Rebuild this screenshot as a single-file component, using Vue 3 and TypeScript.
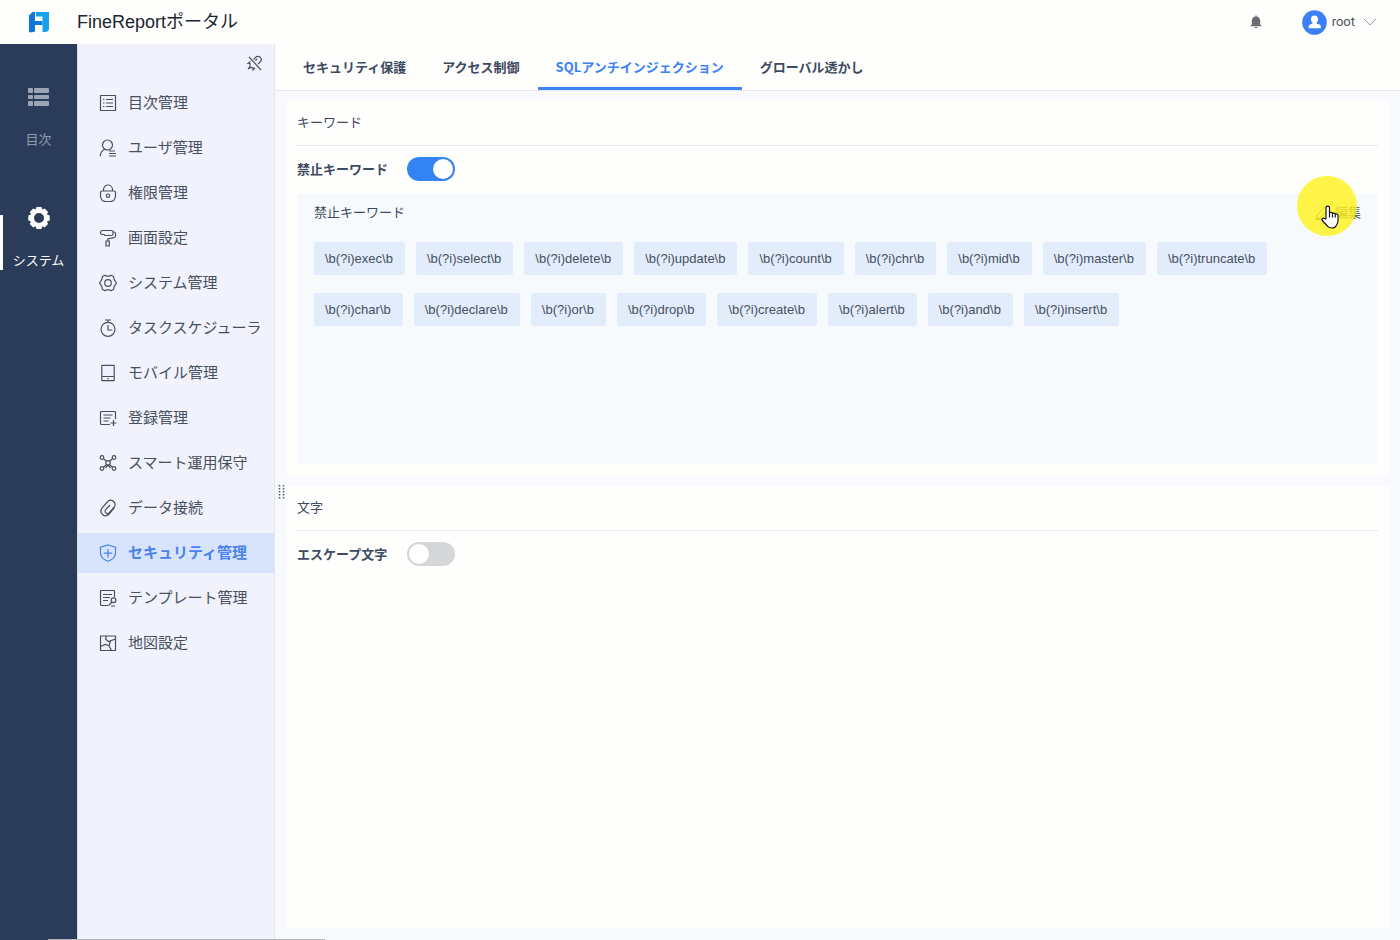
<script setup lang="ts">
import { ref } from 'vue'

interface MenuEntry {
  id: string
  label: string
}

const menu: MenuEntry[] = [
  { id: 'directory', label: '目次管理' },
  { id: 'user', label: 'ユーザ管理' },
  { id: 'authority', label: '権限管理' },
  { id: 'appearance', label: '画面設定' },
  { id: 'system', label: 'システム管理' },
  { id: 'schedule', label: 'タスクスケジューラ' },
  { id: 'mobile', label: 'モバイル管理' },
  { id: 'register', label: '登録管理' },
  { id: 'operation', label: 'スマート運用保守' },
  { id: 'connection', label: 'データ接続' },
  { id: 'security', label: 'セキュリティ管理' },
  { id: 'template', label: 'テンプレート管理' },
  { id: 'map', label: '地図設定' },
]

const tabs: string[] = ['セキュリティ保護', 'アクセス制御', 'SQLアンチインジェクション', 'グローバル透かし']

const words: string[] = [
  'exec', 'select', 'delete', 'update', 'count', 'chr', 'mid', 'master', 'truncate',
  'char', 'declare', 'or', 'drop', 'create', 'alert', 'and', 'insert',
]

const activeMenu = ref('security')
const activeTab = ref(2)
const keywordOn = ref(true)
const escapeOn = ref(false)
</script>

<template>
  <div class="portal">
    <header class="topbar">
      <svg class="logo" viewBox="0 0 22 22" aria-hidden="true">
        <path d="M4.500 1H7v9h7.500v4H7v6.500c-2 .8-4 .8-6 .8V4.500z" fill="#0c78d8" />
        <path d="M8 1h13v16.500c0 2-1.500 3.500-3.500 3.500h-3V5.500H8z" fill="#18a0ea" />
      </svg>
      <h1 class="title">FineReportポータル</h1>
      <button class="bell" type="button" aria-label="通知">
        <svg viewBox="0 0 14 14" width="14" height="14">
          <path d="M6.300 1.500V.5h1.400v1C10 1.900 11.200 3.500 11.200 6v3.300l1.300 1.400v.6h-11v-.6l1.300-1.400V6c0-2.500 1.200-4.100 3.500-4.500zM5.500 12h3c-.3.900-.8 1.200-1.500 1.200S5.800 12.900 5.500 12z" fill="#6b6f74" />
        </svg>
      </button>
      <button class="account" type="button">
        <svg viewBox="0 0 25 25" width="25" height="25" aria-hidden="true">
          <circle cx="12.500" cy="12.500" r="12.300" fill="#3b7ff5" />
          <path d="M12.500 5.500c2.300 0 3.600 1.600 3.600 3.500 0 1.700-.7 2.800-1.600 3.600v.9l2.800 1c1 .4 1.500 1 1.500 1.900v1.900H6.700v-1.900c0-.9.500-1.500 1.500-1.900l2.300-1v-.9C9.600 11.800 8.900 10.700 8.900 9c0-1.900 1.300-3.500 3.600-3.500z" fill="#fff" />
        </svg>
        <span>root</span>
        <svg class="chevron" viewBox="0 0 14 8" width="14" height="8" aria-hidden="true">
          <path d="M1 1l6 6 6-6" fill="none" stroke="#9a9da6" />
        </svg>
      </button>
    </header>

    <div class="body">
      <nav class="rail" aria-label="メイン">
        <button class="rail-item" type="button">
          <svg viewBox="0 0 24 24" width="24" height="24" aria-hidden="true">
            <g fill="#9ba5b5">
              <rect x="1" y="3" width="5" height="5" rx="1" /><rect x="7" y="3" width="15" height="5" rx="1" />
              <rect x="1" y="10" width="5" height="4" rx="1" /><rect x="7" y="10" width="15" height="4" rx="1" />
              <rect x="1" y="16" width="5" height="5" rx="1" /><rect x="7" y="16" width="15" height="5" rx="1" />
            </g>
          </svg>
          <span>目次</span>
        </button>
        <button class="rail-item current" type="button">
          <svg viewBox="0 0 24 24" width="24" height="24" aria-hidden="true">
            <path d="M9.500 1h5l.7 2.600 2.500-1.100 3.400 3.500-1.200 2.500 2.800 1v5l-2.800 1 1.200 2.500-3.400 3.500-2.500-1.200-.7 2.700h-5l-.8-2.700-2.500 1.200L2.800 18 4 15.500l-2.700-1v-5l2.700-1L2.800 6l3.400-3.500 2.500 1.100zM12 7a5 5 0 1 0 0 10 5 5 0 0 0 0-10z" fill="#fff" fill-rule="evenodd" />
          </svg>
          <span>システム</span>
        </button>
      </nav>

      <aside class="side">
        <button class="unpin" type="button" aria-label="固定解除">
          <svg viewBox="0 0 16 16" width="16" height="16">
            <g fill="none" stroke="#4b5361" stroke-width="1.200">
              <path d="M2 2l12 13M6.500 4.500l2-2c1.700-1.600 3.300-1.500 4.600-.3 1.400 1.400 1.500 3.300 0 4.800l-2 2M8.500 5.500l1.700-1.700M3.500 6.500L1 8.500h2v3l-2 2.500 2.700-1.500 2.300.5v2l2-2.300" />
            </g>
          </svg>
        </button>
        <ul class="menu">
          <li v-for="item in menu" :key="item.id">
            <a
              href="#"
              :class="['menu-link', { active: item.id === activeMenu }]"
              @click.prevent="activeMenu = item.id"
            >
              <svg viewBox="0 0 18 18" width="18" height="18" aria-hidden="true">
                <g fill="none" stroke="currentColor" stroke-width="1.200">
                  <template v-if="item.id === 'directory'">
                    <path d="M1.500 1.500h15v15h-15z" />
                    <path d="M4 5.500h1.500M7 5.500h7M4 9h1.500M7 9h7M4 12.500h1.500M7 12.500h7" />
                  </template>
                  <template v-else-if="item.id === 'user'">
                    <circle cx="8.500" cy="6" r="5" />
                    <path d="M6 10.300C3 11.500 1.300 14 1.300 17.300M10 12h6M10 14.500h7M10 17h7" />
                  </template>
                  <template v-else-if="item.id === 'authority'">
                    <path d="M3 7h12c1 0 1.500.5 1.500 1.500v3c0 4-2.500 6-5 6h-5c-2.500 0-5-2-5-6v-3C1.500 7.500 2 7 3 7zM4.500 7V5.500a4.500 4.500 0 0 1 9 0V7" />
                    <circle cx="9" cy="11.700" r="1.700" />
                  </template>
                  <template v-else-if="item.id === 'appearance'">
                    <path d="M3.500 1.500h9c1 0 1.500.5 1.500 1.500v2c0 1-.5 1.500-1.500 1.500h-6c-.8 0-1-.5-1.500-1H3C2 5.500 1.500 5 1.500 4s.5-2.500 2-2.500zM14 3h1c1 0 1.500.7 1.500 1.500v2.500c0 1-.7 1.400-1.500 1.700L8.700 10v2M7 12h3.300v5H7z" />
                  </template>
                  <template v-else-if="item.id === 'system'">
                    <path d="M6 1.200l1.500 1h3l1.500-1 2.700 1.600.2 2 1.300 2.300L17.500 9l-1.300 1.900-1.300 2.300-.2 2L12 16.800l-1.500-1h-3l-1.500 1-2.700-1.600-.2-2-1.300-2.300L.6 9l1.200-1.900 1.300-2.300.2-2z" stroke-linejoin="round" />
                    <circle cx="9" cy="9" r="3.300" />
                  </template>
                  <template v-else-if="item.id === 'schedule'">
                    <circle cx="9" cy="10.300" r="7" />
                    <path d="M6 1h6M9 1v2.300M9 6v5h4.300" />
                  </template>
                  <template v-else-if="item.id === 'mobile'">
                    <path d="M3.500 1.300h11c.4 0 .7.3.7.7v14c0 .4-.3.700-.7.700h-11c-.4 0-.7-.3-.7-.7V2c0-.4.3-.7.7-.7zM3 12.500h12M8.300 14.600h1.400" />
                  </template>
                  <template v-else-if="item.id === 'register'">
                    <path d="M16.500 10V3.500c0-.7-.3-1-1-1h-13c-.7 0-1 .3-1 1v11c0 .7.300 1 1 1H11M4.500 6h9M4.500 9h7M4.500 12h5M14.500 11v6M11.500 14h6" />
                  </template>
                  <template v-else-if="item.id === 'operation'">
                    <circle cx="3" cy="3.500" r="1.800" /><circle cx="15" cy="3.500" r="1.800" />
                    <circle cx="3" cy="14.500" r="1.800" /><circle cx="15" cy="14.500" r="1.800" />
                    <circle cx="9" cy="8.800" r="2.200" />
                    <path d="M4.500 4.700l3 2.600M13.500 4.700l-3 2.600M4.500 13.300l3-2.800M13.500 13.300l-3-2.800M6.500 14l2.500-3 2.500 3" />
                  </template>
                  <template v-else-if="item.id === 'connection'">
                    <path d="M15.500 8.500l-5 6c-2 2.300-4.500 3-6.700 1.300-2.400-1.900-2.500-4.500-.6-6.900L8.300 3c1.600-2 3.900-2.400 6-.8 2.100 1.700 2.400 3.900.7 6l-4.600 5.400c-1 1.200-2.300 1.300-3.400.5s-1.300-2.200-.3-3.400L11 6" />
                  </template>
                  <template v-else-if="item.id === 'security'">
                    <path d="M9 1l7.500 2.300V9c0 4-2.500 6.500-7.500 8.300C4 15.500 1.500 13 1.500 9V3.300zM9 5v8.500M4.800 9.200h8.500" />
                  </template>
                  <template v-else-if="item.id === 'template'">
                    <path d="M15.500 8V2.500c0-.7-.3-1-1-1h-12c-.7 0-1 .3-1 1v13c0 .7.300 1 1 1H9M4 5.500h9M4 8.500h7M4 11.500h5M9.500 16.500l3.500-3.500M12 17h4" />
                    <circle cx="14.500" cy="11.300" r="2.400" />
                  </template>
                  <template v-else>
                    <path d="M1.500 2h15v14.500h-15zM7.500 2l-1 3 3 2.500 7-2.500M1.500 12.500l5-2 3.500 1.200L11.500 7M10 11.700l2.500 4.800" />
                  </template>
                </g>
              </svg>
              <span>{{ item.label }}</span>
            </a>
          </li>
        </ul>
      </aside>

      <main class="content">
        <div class="tabs" role="tablist">
          <button
            v-for="(tab, i) in tabs"
            :key="tab"
            type="button"
            role="tab"
            :aria-selected="i === activeTab"
            :class="['tab', { active: i === activeTab }]"
            @click="activeTab = i"
          >{{ tab }}</button>
        </div>

        <div class="panels">
          <svg class="grip" viewBox="0 0 7 15" width="7" height="15" aria-hidden="true">
            <path d="M1.500 1v14M5.500 1v14" stroke="#555b66" stroke-width="1.500" stroke-dasharray="1.500 1.500" />
          </svg>
          <section class="panel">
            <h2 class="panel-title">キーワード</h2>
            <div class="setting">
              <label for="keyword-switch">禁止キーワード</label>
              <input id="keyword-switch" v-model="keywordOn" class="switch" type="checkbox" role="switch" />
            </div>
            <div class="keywords">
              <div class="keywords-head">
                <h3>禁止キーワード</h3>
                <button class="edit" type="button">
                  <svg viewBox="0 0 16 16" width="16" height="16" aria-hidden="true">
                    <path d="M1 14.500l1.500-5L10 2l3 3-7.500 7.500-4.500 2h9" fill="none" stroke="#3d4a60" />
                  </svg>
                  <span>編集</span>
                  <span class="spot"></span>
                  <svg class="pointer" viewBox="0 0 18 24" width="18" height="24" aria-hidden="true">
                    <path d="M5 14V3c0-2.400 3.500-2.400 3.500 0v5c.6-1 2.700-.8 3 .5.800-.8 2.500-.5 2.800.7 1.200-.6 2.700 0 2.700 1.500V16c0 2-1.200 3.500-2 5-.6 1.500-1.700 2-4 2-2.500 0-3.800-.6-5-2.500L1.300 15.500c-1.100-1.700 1-3 2.200-1.800zM8.500 8v4.500M11.500 8.500v4M14.300 9.500v3" fill="#fff" stroke="#16161c" stroke-width="1.200" stroke-linejoin="round" />
                  </svg>
                </button>
              </div>
              <ul class="tags">
                <li v-for="word in words" :key="word" class="tag">\b(?i){{ word }}\b</li>
              </ul>
            </div>
          </section>

          <section class="panel grow">
            <h2 class="panel-title">文字</h2>
            <div class="setting">
              <label for="escape-switch">エスケープ文字</label>
              <input id="escape-switch" v-model="escapeOn" class="switch" type="checkbox" role="switch" />
            </div>
          </section>
        </div>
      </main>
    </div>
    <div class="progress"></div>
  </div>
</template>

<style>
body {
  margin: 0;
}
</style>

<style scoped>
.portal {
  position: relative;
  display: flex;
  flex-direction: column;
  min-height: 100vh;
  background: #fefefd;
  color: #3d4a60;
  font-family: "Liberation Sans", "Noto Sans CJK JP", sans-serif;
  font-size: 13px;
  line-height: 20px;
}

.portal * {
  box-sizing: border-box;
}

button {
  margin: 0;
  padding: 0;
  border: 0;
  background: none;
  color: inherit;
  font: inherit;
  cursor: pointer;
}

ul {
  margin: 0;
  padding: 0;
  list-style: none;
}

svg {
  flex: none;
}

.topbar {
  display: flex;
  align-items: center;
  height: 44px;
  padding: 0 23px 0 28px;
}

.logo {
  width: 22px;
  height: 22px;
}

.title {
  margin: 0 auto 0 27px;
  color: #20242c;
  font-size: 18px;
  font-weight: 400;
  line-height: 26px;
}

.bell {
  display: flex;
  margin-right: 39px;
}

.account {
  display: flex;
  align-items: center;
  gap: 5px;
  color: #50545c;
  font-family: Roboto, sans-serif;
}

.chevron {
  margin-left: 3px;
}

.body {
  display: flex;
  flex: 1;
}

.rail {
  width: 77px;
  padding-top: 41px;
  background: #2b3c5a;
}

.rail-item {
  position: relative;
  display: flex;
  flex-direction: column;
  align-items: center;
  gap: 21px;
  width: 100%;
  margin-bottom: 56px;
  color: #929caf;
}

.rail-item.current {
  color: #fff;
}

.rail-item.current::before {
  content: "";
  position: absolute;
  top: 9px;
  left: 0;
  width: 3px;
  height: 55px;
  background: #fff;
}

.side {
  width: 198px;
  padding-top: 11px;
  border-left: 1px solid #d5ddec;
  border-right: 1px solid #e3e6ee;
  background: #f1f2fb;
}

.unpin {
  display: flex;
  margin: 0 11px 12px auto;
}

.menu {
  display: flex;
  flex-direction: column;
  gap: 5px;
}

.menu-link {
  display: flex;
  align-items: center;
  gap: 11px;
  height: 40px;
  padding-left: 21px;
  color: #48505f;
  font-size: 15px;
  text-decoration: none;
  white-space: nowrap;
}

.menu-link.active {
  background: #d8e4fc;
  color: #4a82ee;
  font-weight: 700;
}

.content {
  display: flex;
  flex: 1;
  flex-direction: column;
  min-width: 0;
}

.tabs {
  display: flex;
  height: 47px;
  padding-left: 10px;
  border-bottom: 1px solid #e8e9ed;
}

.tab {
  padding: 2px 18px 0;
  border-bottom: 3px solid transparent;
  font-family: "Noto Sans CJK JP", sans-serif;
  font-weight: 700;
}

.tab.active {
  border-bottom-color: #3b82f2;
  color: #3b82f2;
}

.panels {
  position: relative;
  display: flex;
  flex: 1;
  flex-direction: column;
  gap: 11px;
  padding: 10px 11px 12px 12px;
  background: #f8fafd;
}

.grip {
  position: absolute;
  top: 393px;
  left: 3px;
}

.panel {
  padding: 0 11px 11px 10px;
  background: #fefefd;
}

.grow {
  flex: 1;
}

.panel-title {
  margin: 0;
  padding: 12px 0;
  border-bottom: 1px solid #e9eaed;
  font-size: 13px;
  font-weight: 400;
}

.setting {
  display: flex;
  align-items: center;
  gap: 17px;
  height: 48px;
  padding-bottom: 2px;
}

.setting label {
  min-width: 93px;
  padding-top: 2px;
  font-weight: 700;
}

.switch {
  display: flex;
  align-items: center;
  appearance: none;
  width: 48px;
  height: 24px;
  margin: 0;
  padding: 2px;
  border-radius: 12px;
  background: #d4d6d8;
  cursor: pointer;
}

.switch::before {
  content: "";
  width: 20px;
  height: 20px;
  border-radius: 50%;
  background: #fff;
}

.switch:checked {
  justify-content: flex-end;
  background: #3483f5;
}

.keywords {
  min-height: 270px;
  padding: 9px 17px;
  background: #f6fafd;
}

.keywords-head {
  display: flex;
  align-items: center;
  justify-content: space-between;
  margin-bottom: 19px;
}

.keywords-head h3 {
  margin: 0;
  font-size: 13px;
  font-weight: 400;
}

.edit {
  position: relative;
  display: flex;
  align-items: center;
  gap: 4px;
}

.spot {
  position: absolute;
  top: -27px;
  left: -18px;
  width: 60px;
  height: 60px;
  border-radius: 50%;
  background: rgba(255, 241, 30, 0.82);
}

.pointer {
  position: absolute;
  top: 2px;
  left: 6px;
}

.tags {
  display: flex;
  flex-wrap: wrap;
  gap: 18px 11px;
}

.tag {
  padding: 0 12px 0 11px;
  border-radius: 2px;
  background: #e3ecfb;
  color: #465062;
  line-height: 33px;
}

.progress {
  position: absolute;
  bottom: 0;
  left: 48px;
  width: 277px;
  height: 1px;
  background: #b4b6ba;
}
</style>
